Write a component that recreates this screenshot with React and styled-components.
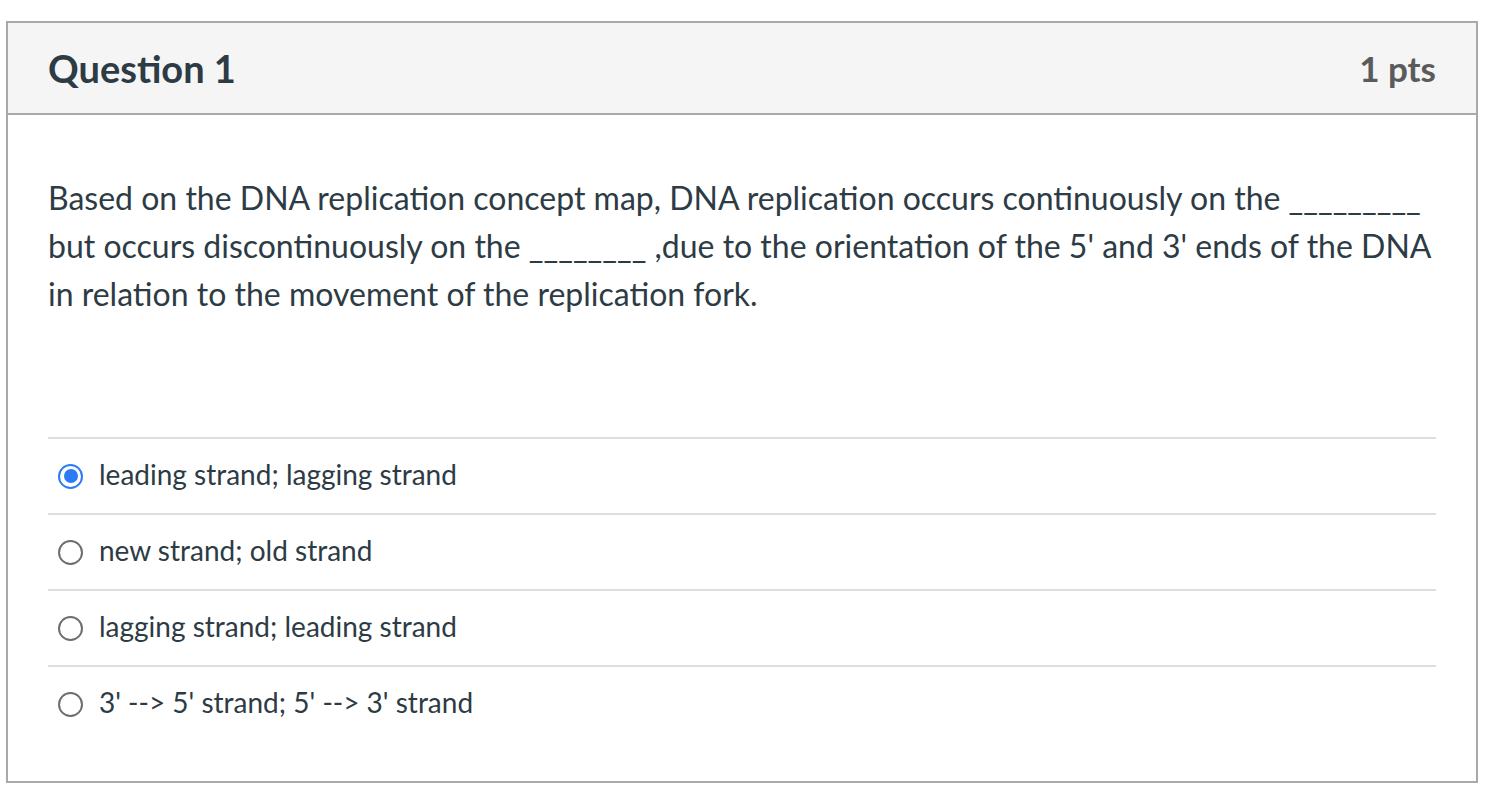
import React from "react";
import styled, { createGlobalStyle } from "styled-components";

const GlobalStyle = createGlobalStyle`
  html, body {
    margin: 0;
    padding: 0;
    background: #ffffff;
  }
  body {
    font-family: Lato, "Open Sans", "Liberation Sans", sans-serif;
    color: #2d3b45;
  }
`;

const Page = styled.div`
  padding: 21px 10px 21px 6px;
`;

const Card = styled.section`
  border: 2px solid #a9a9a9;
  background: #ffffff;
`;

const Header = styled.header`
  display: flex;
  align-items: center;
  justify-content: space-between;
  height: 90px;
  padding: 0 40px 0 40px;
  background: #f5f5f5;
  border-bottom: 2px solid #a9a9a9;
`;

const Title = styled.h2`
  margin: 0;
  font-size: 38px;
  font-weight: 700;
  line-height: 1;
  color: #2d3b45;
`;

const Points = styled.span`
  font-size: 35px;
  font-weight: 700;
  line-height: 1;
  color: #5b5b5b;
`;

const Body = styled.div`
  padding: 59px 40px 40px 40px;
`;

const Prompt = styled.p`
  margin: 0 0 119px 0;
  font-size: 32px;
  line-height: 48px;
  color: #2d3b45;
`;

const Answers = styled.div`
  display: flex;
  flex-direction: column;
`;

const AnswerRow = styled.label`
  display: flex;
  align-items: center;
  gap: 16px;
  padding: 11px 0 15px 10px;
  border-top: 2px solid #dedede;
  font-size: 28px;
  line-height: 48px;
  color: #2d3b45;
`;

const Radio = styled.span`
  flex: 0 0 auto;
  box-sizing: border-box;
  width: 25px;
  height: 25px;
  margin-top: 4px;
  border-radius: 50%;
  border: ${(p) => (p.$checked ? "2.5px solid #2b7bf7" : "2px solid #6e6e6e")};
  background: #ffffff;
  display: flex;
  align-items: center;
  justify-content: center;

  &::after {
    content: "";
    display: ${(p) => (p.$checked ? "block" : "none")};
    width: 14px;
    height: 14px;
    border-radius: 50%;
    background: #2b7bf7;
  }
`;

const answers = [
  { text: "leading strand; lagging strand", checked: true },
  { text: "new strand; old strand", checked: false },
  { text: "lagging strand; leading strand", checked: false },
  { text: "3' --> 5' strand; 5' --> 3' strand", checked: false },
];

export default function App() {
  return (
    <>
      <GlobalStyle />
      <Page>
        <Card>
          <Header>
            <Title>Question 1</Title>
            <Points>1 pts</Points>
          </Header>
          <Body>
            <Prompt>
              Based on the DNA replication concept map, DNA replication occurs
              continuously on the _________ but occurs discontinuously on the
              ________ ,due to the orientation of the 5' and 3' ends of the DNA
              in relation to the movement of the replication fork.
            </Prompt>
            <Answers>
              {answers.map((a) => (
                <AnswerRow key={a.text}>
                  <Radio $checked={a.checked} />
                  <span>{a.text}</span>
                </AnswerRow>
              ))}
            </Answers>
          </Body>
        </Card>
      </Page>
    </>
  );
}
